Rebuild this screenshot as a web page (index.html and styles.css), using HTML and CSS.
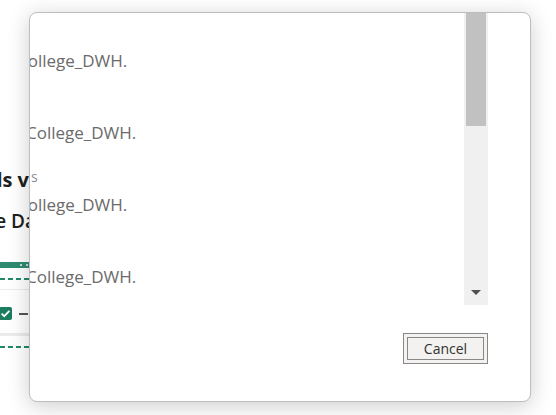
FILE: index.html
```html
<!DOCTYPE html>
<html lang="en">
<head>
<meta charset="utf-8">
<title>Dialog</title>
<link rel="stylesheet" href="styles.css">
</head>
<body>
<div class="page">
  <div class="strip">
    <div class="line heading"><span>Details v</span></div>
    <div class="line subhead"><span class="tail">Compare Da</span></div>
    <div class="bar"><i></i><i></i></div>
    <div class="dash"></div>
    <div class="sep"></div>
    <div class="line checkrow">
      <span class="check"><svg width="13" height="13" viewBox="0 0 13 13"><path d="M2.6 6.6 L5.2 9.2 L10.4 3.8" fill="none" stroke="#fff" stroke-width="1.8"/></svg></span>
      <span class="minus"></span>
    </div>
    <div class="band"></div>
    <div class="dash"></div>
  </div>
</div>
<div class="dialog">
  <div class="list">
    <div class="items">
      <div class="item"><span class="name shift">College_DWH.</span></div>
      <div class="item"><span class="name">College_DWH.</span><span class="frag">s</span></div>
      <div class="item"><span class="name shift">College_DWH.</span></div>
      <div class="item"><span class="name">College_DWH.</span></div>
    </div>
    <div class="scrollbar">
      <div class="thumb"></div>
      <div class="arrow"></div>
    </div>
  </div>
  <div class="footer">
    <button class="btn" type="button"><span class="btn-inner">Cancel</span></button>
  </div>
</div>
</body>
</html>
```

FILE: styles.css
```css
html, body {
  margin: 0;
  padding: 0;
}
body {
  width: 556px;
  height: 415px;
  overflow: hidden;
  position: relative;
  background: #ffffff;
  font-family: "Open Sans", "Noto Sans", sans-serif;
}
.page {
  width: 29px;
  height: 415px;
  overflow: hidden;
}
.strip {
  padding-top: 168px;
  width: 29px;
}
.line {
  display: flex;
  justify-content: flex-end;
  white-space: nowrap;
}
.heading {
  font-size: 20px;
  font-weight: 700;
  line-height: 24px;
  color: #201f1e;
}
.subhead {
  margin-top: 17px;
  font-size: 19px;
  font-weight: 600;
  line-height: 24px;
  color: #201f1e;
}
.tail {
  margin-right: -7px;
}
.bar {
  margin-top: 29px;
  height: 6px;
  background: #2f8b70;
  display: flex;
  justify-content: flex-end;
  align-items: center;
  gap: 4px;
  padding-right: 1px;
}
.bar i {
  width: 2px;
  height: 2px;
  background: #c9ddd6;
}
.dash {
  margin-top: 10px;
  height: 2px;
  background: repeating-linear-gradient(90deg, #1f8a69 0 5px, transparent 5px 8px);
}
.sep {
  margin-top: 9px;
  height: 1px;
  background: #ececec;
}
.checkrow {
  margin-top: 17px;
  align-items: center;
  gap: 7px;
  padding-right: 1px;
  height: 13px;
}
.check {
  flex: none;
  width: 13px;
  height: 13px;
  border-radius: 2px;
  background: #1c7c5f;
  display: block;
}
.check svg {
  display: block;
}
.minus {
  flex: none;
  width: 9px;
  height: 2px;
  background: #555555;
}
.band {
  margin-top: 13px;
  height: 3px;
  background: #ebebeb;
}

.dialog {
  position: absolute;
  left: 29px;
  top: 12px;
  width: 500px;
  height: 388px;
  border: 1px solid #bdbdbd;
  border-radius: 8px;
  background: #ffffff;
  box-shadow: 0 4px 22px rgba(0, 0, 0, 0.2);
  overflow: hidden;
  display: flex;
  flex-direction: column;
}
.list {
  height: 292px;
  display: flex;
  flex: none;
}
.items {
  flex: 1;
  overflow: hidden;
  padding-top: 36px;
}
.item {
  height: 72px;
  display: flex;
  flex-direction: column;
}
.name {
  font-size: 17px;
  line-height: 24px;
  color: #6b6b6b;
  white-space: nowrap;
  margin-left: -4px;
}
.name.shift {
  margin-left: -13px;
}
.frag {
  margin-top: 23px;
  margin-left: 1px;
  font-size: 14px;
  line-height: 18px;
  color: #8a8c99;
}
.scrollbar {
  flex: none;
  width: 24px;
  margin-right: 42px;
  background: #f0f0f0;
  display: flex;
  flex-direction: column;
  align-items: center;
}
.thumb {
  width: 20px;
  height: 113px;
  background: #c1c1c1;
}
.arrow {
  margin-top: auto;
  margin-bottom: 10px;
  width: 0;
  height: 0;
  border-left: 5px solid transparent;
  border-right: 5px solid transparent;
  border-top: 5px solid #505050;
}
.footer {
  display: flex;
  justify-content: flex-end;
  padding-top: 28px;
  padding-right: 42px;
}
.btn {
  width: 85px;
  height: 31px;
  padding: 3px;
  margin: 0;
  border: 1px solid #8a8886;
  background: #f3f2f1;
  font-family: "Open Sans", "Noto Sans", sans-serif;
  display: flex;
}
.btn-inner {
  flex: 1;
  border: 1px solid #8a8886;
  font-size: 14px;
  line-height: 21px;
  color: #323130;
  text-align: center;
}
```
